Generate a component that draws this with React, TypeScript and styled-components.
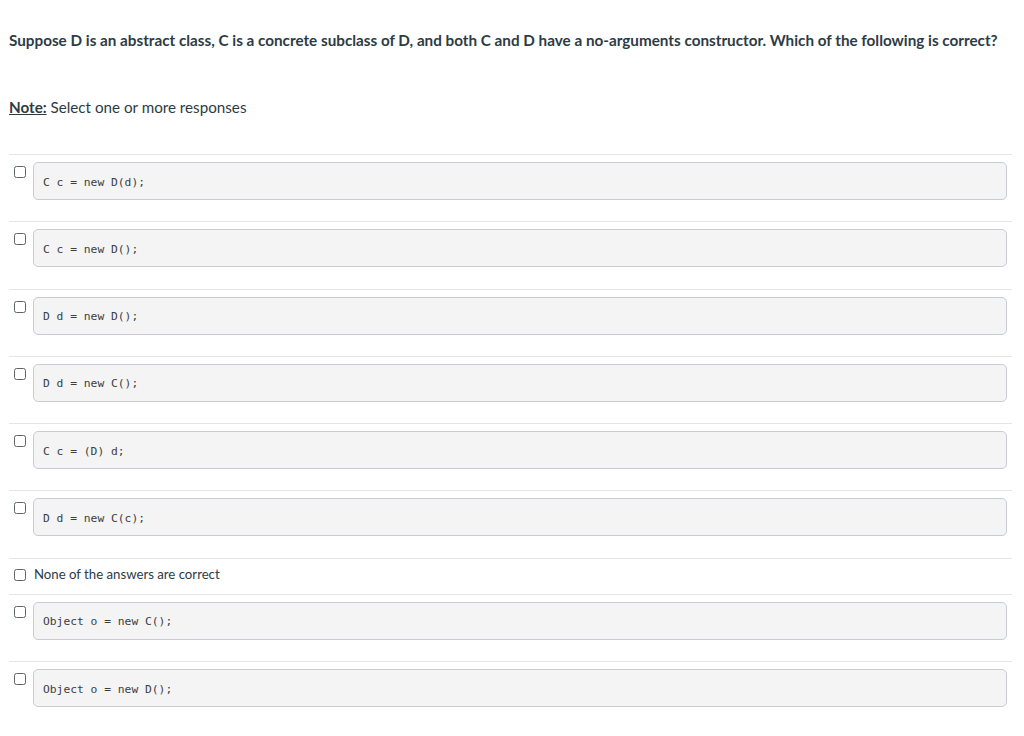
import React from "react";
import styled, { createGlobalStyle } from "styled-components";

const Global = createGlobalStyle`
  html, body { margin: 0; padding: 0; background: #ffffff; }
  body { font-family: Lato, "Noto Sans", sans-serif; color: #2d3b45; }
`;

const Page = styled.div`
  padding: 30px 12px 0 9px;
  width: 1003px;
`;

const Title = styled.p`
  margin: 0;
  font-size: 15.25px;
  line-height: 20px;
  font-weight: 700;
  color: #2d3b45;
`;

const Note = styled.p`
  margin: 47px 0 0 0;
  font-size: 15.2px;
  line-height: 20px;
  color: #2d3b45;
`;

const NoteLabel = styled.span`
  text-decoration: underline;
  font-weight: 700;
`;

const List = styled.div`
  margin-top: 37px;
  display: flex;
  flex-direction: column;
`;

const Row = styled.div<{ $plain?: boolean }>`
  border-top: 1px solid #e3e5e7;
  display: flex;
  align-items: ${(p) => (p.$plain ? "center" : "flex-start")};
  gap: ${(p) => (p.$plain ? "8px" : "7px")};
  padding: ${(p) => (p.$plain ? "0 5px 4px 5px" : "7px 5px 21.3px 5px")};
  height: ${(p) => (p.$plain ? "36px" : "auto")};
  box-sizing: border-box;
`;

const Check = styled.span<{ $plain?: boolean }>`
  flex: none;
  box-sizing: border-box;
  width: 12px;
  height: 12px;
  margin-top: ${(p) => (p.$plain ? "1px" : "4px")};
  border: 1.3px solid #5f6468;
  border-radius: 2.5px;
  background: #fff;
`;

const CodeBox = styled.div`
  flex: 1;
  box-sizing: border-box;
  height: 38px;
  display: flex;
  align-items: center;
  padding: 2px 9px 0 9px;
  background: #f4f4f4;
  border: 1px solid #c9cdd1;
  border-radius: 5px;
  font-family: "DejaVu Sans Mono", "Liberation Mono", monospace;
  font-size: 11.3px;
  color: #3a3f44;
  white-space: pre;
`;

const Label = styled.span`
  font-size: 13.2px;
  color: #2d3b45;
`;

const options: { code?: string; text?: string }[] = [
  { code: "C c = new D(d);" },
  { code: "C c = new D();" },
  { code: "D d = new D();" },
  { code: "D d = new C();" },
  { code: "C c = (D) d;" },
  { code: "D d = new C(c);" },
  { text: "None of the answers are correct" },
  { code: "Object o = new C();" },
  { code: "Object o = new D();" },
];

export default function App() {
  return (
    <>
      <Global />
      <Page>
        <Title>
          Suppose D is an abstract class, C is a concrete subclass of D, and both C and D have a
          no-arguments constructor. Which of the following is correct?
        </Title>
        <Note>
          <NoteLabel>Note:</NoteLabel> Select one or more responses
        </Note>
        <List>
          {options.map((o, i) =>
            o.text ? (
              <Row key={i} $plain>
                <Check $plain />
                <Label>{o.text}</Label>
              </Row>
            ) : (
              <Row key={i}>
                <Check />
                <CodeBox>{o.code}</CodeBox>
              </Row>
            )
          )}
        </List>
      </Page>
    </>
  );
}
